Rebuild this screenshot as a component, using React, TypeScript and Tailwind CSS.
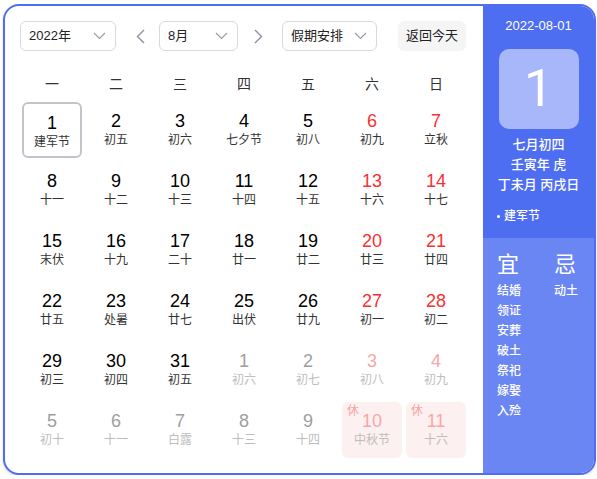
import React from "react";

type Day = {
  d: number;
  lunar: string;
  muted?: boolean;
  weekend?: boolean;
  today?: boolean;
  rest?: boolean;
};

const weekdays = ["一", "二", "三", "四", "五", "六", "日"];

const rows: string[][] = [
  ["1:建军节", "2:初五", "3:初六", "4:七夕节", "5:初八", "6:初九", "7:立秋"],
  ["8:十一", "9:十二", "10:十三", "11:十四", "12:十五", "13:十六", "14:十七"],
  ["15:末伏", "16:十九", "17:二十", "18:廿一", "19:廿二", "20:廿三", "21:廿四"],
  ["22:廿五", "23:处暑", "24:廿七", "25:出伏", "26:廿九", "27:初一", "28:初二"],
  ["29:初三", "30:初四", "31:初五", "1:初六", "2:初七", "3:初八", "4:初九"],
  ["5:初十", "6:十一", "7:白露", "8:十三", "9:十四", "10:中秋节", "11:十六"],
];

const days: Day[] = rows.flatMap((row, r) =>
  row.map((s, c) => {
    const [n, lunar] = s.split(":");
    const muted = (r === 4 && c >= 3) || r === 5;
    return {
      d: Number(n),
      lunar,
      muted,
      weekend: c >= 5,
      today: r === 0 && c === 0,
      rest: r === 5 && c >= 5,
    };
  })
);

const good = ["结婚", "领证", "安葬", "破土", "祭祀", "嫁娶", "入殓"];

function Chevron() {
  return (
    <svg width="13" height="8" viewBox="0 0 13 8" fill="none">
      <path d="M1 1l5.5 5.5L12 1" stroke="#9a9ea9" strokeWidth="1.2" />
    </svg>
  );
}

function Select({ label, width }: { label: string; width: string }) {
  return (
    <div
      className={`flex h-[30px] ${width} items-center justify-between rounded-[6px] border border-[#d7d9e0] pl-[8px] pr-[9px] text-[13px] text-[#222]`}
    >
      <span>{label}</span>
      <Chevron />
    </div>
  );
}

function Arrow({ dir }: { dir: "l" | "r" }) {
  return (
    <div className="flex h-[30px] w-[20px] items-center justify-center">
      <svg width="9" height="15" viewBox="0 0 9 15" fill="none">
        <path
          d={dir === "l" ? "M8 1L1.5 7.5 8 14" : "M1 1l6.5 6.5L1 14"}
          stroke="#8c909c"
          strokeWidth="1.4"
        />
      </svg>
    </div>
  );
}

function Cell({ day }: { day: Day }) {
  let num = "text-black";
  let sub = "text-[#333]";
  if (day.muted) {
    num = day.weekend ? "text-[#f8a7a7]" : "text-[#9e9e9e]";
    sub = "text-[#bdbdbd]";
  } else if (day.weekend) {
    num = "text-[#f73131]";
  }
  return (
    <div className="flex h-[60px] justify-center pt-[2px]">
      <div
        className={`relative flex h-[56px] w-[60px] flex-col items-center rounded-[6px] pt-[9px] ${
          day.today ? "border-2 border-[#c2c4cc] pt-[7px]" : ""
        } ${day.rest ? "bg-[#fdf0f0]" : ""}`}
      >
        {day.rest && (
          <span className="absolute left-[5px] top-[1px] text-[12px] leading-[16px] text-[#f7a3a3]">
            休
          </span>
        )}
        <span className={`text-[18px] leading-[20px] ${num}`}>{day.d}</span>
        <span className={`mt-[1px] text-[12px] leading-[16px] ${sub}`}>{day.lunar}</span>
      </div>
    </div>
  );
}

export default function App() {
  return (
    <div className="pl-[3px] pt-[4px] font-['Liberation_Sans','Noto_Sans_CJK_SC',sans-serif]">
      <div className="flex h-[471px] w-[593px] overflow-hidden rounded-[16px] border-2 border-[#4e6ef2] bg-white shadow-[0_2px_3px_rgba(0,0,0,0.12)]">
        {/* calendar body */}
        <div className="w-[478px] pl-[15px] pt-[15px]">
          <div className="flex items-center">
            <Select label="2022年" width="w-[96px]" />
            <div className="ml-[14px]">
              <Arrow dir="l" />
            </div>
            <div className="ml-[9px]">
              <Select label="8月" width="w-[79px]" />
            </div>
            <div className="ml-[10px]">
              <Arrow dir="r" />
            </div>
            <div className="ml-[14px]">
              <Select label="假期安排" width="w-[95px]" />
            </div>
            <button className="ml-[21px] h-[30px] w-[68px] rounded-[6px] bg-[#f5f5f6] text-[13px] text-[#222]">
              返回今天
            </button>
          </div>

          <div className="mt-[21px] grid w-[448px] grid-cols-7">
            {weekdays.map((w) => (
              <div key={w} className="h-[24px] text-center text-[14px] leading-[24px] text-[#333]">
                {w}
              </div>
            ))}
          </div>
          <div className="mt-[4px] grid w-[448px] grid-cols-7">
            {days.map((day, i) => (
              <Cell key={i} day={day} />
            ))}
          </div>
        </div>

        {/* side panel */}
        <div className="flex w-[111px] flex-col text-white">
          <div className="flex h-[232px] flex-col bg-[#4e6ef2]">
            <div className="pt-[11px] text-center text-[13px] leading-[18px]">2022-08-01</div>
            <div className="mx-auto mt-[14px] flex h-[80px] w-[80px] items-center justify-center rounded-[10px] bg-[#a8b7f9]">
              <span className="font-['Roboto'] text-[52px] leading-none">1</span>
            </div>
            <div className="mt-[6px] text-center text-[13px] font-medium leading-[20px]">
              <div>七月初四</div>
              <div>壬寅年 虎</div>
              <div>丁未月 丙戌日</div>
            </div>
            <div className="mt-[13px] flex items-center pl-[14px] text-[12px] font-medium leading-[16px]">
              <span className="mr-[4px] h-[3px] w-[3px] rounded-full bg-white" />
              建军节
            </div>
          </div>
          <div className="flex flex-1 bg-[#6a86f3] pl-[14px] pt-[15px]">
            <div className="w-[57px]">
              <div className="text-[22px] leading-[24px]">宜</div>
              <div className="mt-[4px] text-[12px] font-medium leading-[20px]">
                {good.map((g) => (
                  <div key={g}>{g}</div>
                ))}
              </div>
            </div>
            <div>
              <div className="text-[22px] leading-[24px]">忌</div>
              <div className="mt-[4px] text-[12px] font-medium leading-[20px]">动土</div>
            </div>
          </div>
        </div>
      </div>
    </div>
  );
}
